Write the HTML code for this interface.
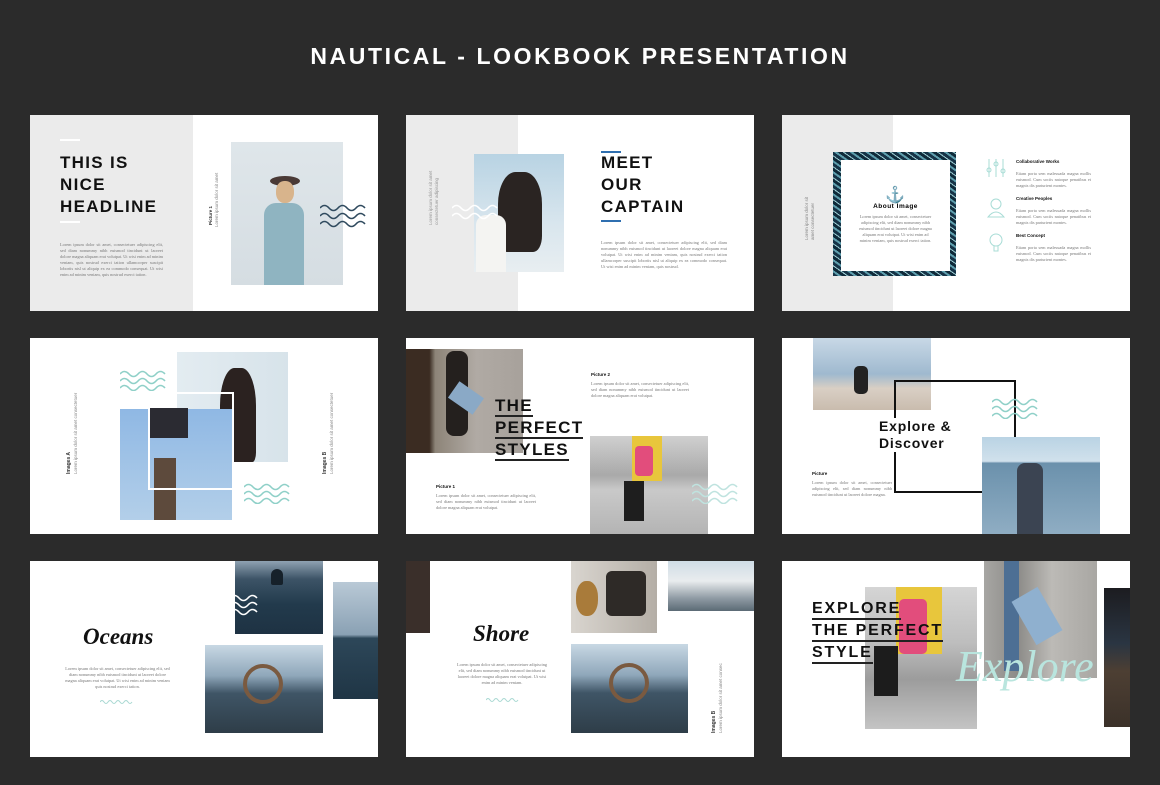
<!DOCTYPE html>
<html><head><meta charset="utf-8"><style>
*{margin:0;padding:0;box-sizing:border-box}
body{width:1160px;height:785px;background:#2b2b2b;position:relative;overflow:hidden;font-family:"Liberation Sans",sans-serif}
.t{position:absolute;top:43px;left:0;width:1160px;text-align:center;color:#fff;font-weight:bold;font-size:23px;letter-spacing:2.6px}
.s{position:absolute;width:348px;height:196px;background:#fff;overflow:hidden}
.a{position:absolute}
.g{background:#ebebeb}
.h{position:absolute;font-weight:bold;color:#111;font-size:17px;line-height:22px;letter-spacing:1.3px}
.p{position:absolute;font-size:4.3px;line-height:6px;color:#777;font-family:"Liberation Serif",serif;text-align:justify}
.lb{position:absolute;font-size:4.5px;font-weight:bold;color:#111}
.sc{position:absolute;font-family:"Liberation Serif",serif;font-style:italic;font-weight:bold;color:#111}
.v{position:absolute;transform:rotate(-90deg);transform-origin:left top;font-size:4.5px;color:#333;white-space:nowrap}
.u{border-bottom:2px solid #222;display:inline-block;line-height:19px}
</style></head><body>
<div class="t">NAUTICAL - LOOKBOOK PRESENTATION</div>
<svg width="0" height="0" style="position:absolute"><defs>
<path id="wv" d="M0 4 q4.5 -5 9 0 t9 0 t9 0 t9 0 t9 0" fill="none" stroke-width="1.6"/>
</defs></svg>

<!-- Slide 1 -->
<div class="s" style="left:30px;top:115px">
 <div class="a g" style="left:0;top:0;width:163px;height:196px"></div>
 <div class="a" style="left:30px;top:24px;width:20px;height:2px;background:#fff"></div>
 <div class="h" style="left:30px;top:37px">THIS IS<br>NICE<br>HEADLINE</div>
 <div class="a" style="left:30px;top:106px;width:20px;height:2px;background:#fff"></div>
 <div class="p" style="left:30px;top:127px;width:103px">Lorem ipsum dolor sit amet, consectetuer adipiscing elit, sed diam nonummy nibh euismod tincidunt ut laoreet dolore magna aliquam erat volutpat. Ut wisi enim ad minim veniam, quis nostrud exerci tation ullamcorper suscipit lobortis nisl ut aliquip ex ea commodo consequat. Ut wisi enim ad minim veniam, quis nostrud exerci tation.</div>
 <div class="v" style="left:178px;top:110px;font-weight:bold">Picture 1</div>
 <div class="v" style="left:184px;top:112px;color:#888">Lorem ipsum dolor sit amet</div>
 <div class="a" style="left:201px;top:27px;width:112px;height:143px;background:linear-gradient(#dfe6ea,#d5dde2)"></div>
 <div class="a" style="left:240px;top:61px;width:30px;height:10px;border-radius:50%;background:#4a3a36"></div>
 <div class="a" style="left:246px;top:66px;width:18px;height:22px;border-radius:45%;background:#d8b48c"></div>
 <div class="a" style="left:234px;top:88px;width:40px;height:82px;border-radius:12px 12px 0 0;background:#8fb4c1"></div>
 <svg class="a" style="left:290px;top:88px" width="46" height="26"><g stroke="#2f4a5e"><use href="#wv" y="1"/><use href="#wv" y="9"/><use href="#wv" y="17"/></g></svg>
</div>

<!-- Slide 2 -->
<div class="s" style="left:406px;top:115px">
 <div class="a g" style="left:0;top:0;width:112px;height:196px"></div>
 <div class="v" style="left:22px;top:110px;color:#999">Lorem ipsum dolor sit amet</div>
 <div class="v" style="left:28px;top:110px;color:#999">consectetuer adipiscing</div>
 <div class="a" style="left:68px;top:39px;width:90px;height:118px;background:linear-gradient(#b8d3e3,#d9e6ee 60%,#e8eef1)"></div>
 <div class="a" style="left:92px;top:57px;width:44px;height:80px;border-radius:40% 40% 20% 20%;background:#2a2422"></div>
 <div class="a" style="left:70px;top:100px;width:30px;height:57px;background:#f4f4f2;border-radius:10px 10px 0 0"></div>
 <svg class="a" style="left:46px;top:88px" width="46" height="20"><g stroke="#fff"><use href="#wv" y="1"/><use href="#wv" y="9"/></g></svg>
 <div class="a" style="left:195px;top:36px;width:20px;height:2px;background:#2f6fb0"></div>
 <div class="h" style="left:195px;top:37px">MEET<br>OUR<br>CAPTAIN</div>
 <div class="a" style="left:195px;top:105px;width:20px;height:2px;background:#2f6fb0"></div>
 <div class="p" style="left:195px;top:125px;width:126px">Lorem ipsum dolor sit amet, consectetuer adipiscing elit, sed diam nonummy nibh euismod tincidunt ut laoreet dolore magna aliquam erat volutpat. Ut wisi enim ad minim veniam, quis nostrud exerci tation ullamcorper suscipit lobortis nisl ut aliquip ex ea commodo consequat. Ut wisi enim ad minim veniam, quis nostrud.</div>
</div>

<!-- Slide 3 -->
<div class="s" style="left:782px;top:115px">
 <div class="a g" style="left:0;top:0;width:111px;height:196px"></div>
 <div class="v" style="left:22px;top:125px;color:#888">Lorem ipsum dolor sit</div>
 <div class="v" style="left:28px;top:125px;color:#888">amet consectetuer</div>
 <div class="a" style="left:51px;top:37px;width:123px;height:124px;background:repeating-linear-gradient(35deg,#163347 0 3px,#5f9fae 3px 5px,#0f2a3a 5px 8px,#9fd0d6 8px 9px)"></div>
 <div class="a" style="left:59px;top:45px;width:109px;height:111px;background:#fff"></div>
 <div class="a" style="left:103px;top:70px;color:#a8dcd6;font-size:16px">⚓</div>
 <div class="a" style="left:59px;top:88px;width:109px;text-align:center;font-size:6.5px;font-weight:bold;letter-spacing:.5px">About Image</div>
 <div class="p" style="left:76px;top:99px;width:75px;text-align:center">Lorem ipsum dolor sit amet, consectetuer adipiscing elit, sed diam nonummy nibh euismod tincidunt ut laoreet dolore magna aliquam erat volutpat. Ut wisi enim ad minim veniam, quis nostrud exerci tation.</div>
 <svg class="a" style="left:203px;top:42px" width="22" height="110" fill="none" stroke="#a8dcd6" stroke-width="1">
  <path d="M4 2v18M11 2v18M18 2v18"/><circle cx="4" cy="13" r="2"/><circle cx="11" cy="7" r="2"/><circle cx="18" cy="14" r="2"/>
  <circle cx="11" cy="47" r="5"/><path d="M3 60q8-10 16 0z"/>
  <circle cx="11" cy="83" r="6"/><path d="M9 89v5h4v-5"/>
 </svg>
 <div class="lb" style="left:234px;top:44px">Collaborative Works</div>
 <div class="p" style="left:234px;top:56px;width:75px">Etiam porta sem malesuada magna mollis euismod. Cum sociis natoque penatibus et magnis dis parturient montes.</div>
 <div class="lb" style="left:234px;top:81px">Creative Peoples</div>
 <div class="p" style="left:234px;top:93px;width:75px">Etiam porta sem malesuada magna mollis euismod. Cum sociis natoque penatibus et magnis dis parturient montes.</div>
 <div class="lb" style="left:234px;top:118px">Best Concept</div>
 <div class="p" style="left:234px;top:130px;width:75px">Etiam porta sem malesuada magna mollis euismod. Cum sociis natoque penatibus et magnis dis parturient montes.</div>
</div>

<!-- Slide 4 -->
<div class="s" style="left:30px;top:338px">
 <div class="a" style="left:147px;top:14px;width:111px;height:110px;background:linear-gradient(90deg,#e3ecf1,#d7e3ea)"></div>
 <div class="a" style="left:190px;top:30px;width:36px;height:94px;border-radius:40% 40% 10% 10%;background:#2b2220"></div>
 <div class="a" style="left:90px;top:71px;width:112px;height:111px;background:linear-gradient(#8fb8e4,#b3cfe9)"></div>
 <div class="a" style="left:124px;top:120px;width:22px;height:62px;background:#5d4a3c"></div>
 <div class="a" style="left:118px;top:70px;width:40px;height:30px;background:#2b2b32"></div>
 <div class="a" style="left:118px;top:54px;width:86px;height:98px;border:2px solid #fff"></div>
 <svg class="a" style="left:90px;top:31px" width="46" height="22"><g stroke="#8fd0c8"><use href="#wv" y="1"/><use href="#wv" y="8"/><use href="#wv" y="15"/></g></svg>
 <svg class="a" style="left:214px;top:144px" width="46" height="22"><g stroke="#8fd0c8"><use href="#wv" y="1"/><use href="#wv" y="8"/><use href="#wv" y="15"/></g></svg>
 <div class="v" style="left:36px;top:136px;font-weight:bold;font-size:5px">Images A</div>
 <div class="v" style="left:43px;top:136px;color:#888">Lorem ipsum dolor sit amet consectetuer</div>
 <div class="v" style="left:292px;top:136px;font-weight:bold;font-size:5px">Images B</div>
 <div class="v" style="left:299px;top:136px;color:#888">Lorem ipsum dolor sit amet consectetuer</div>
</div>

<!-- Slide 5 -->
<div class="s" style="left:406px;top:338px">
 <div class="a" style="left:0;top:11px;width:117px;height:104px;background:linear-gradient(90deg,#3b2c22 0 20%,#8d8478 25%,#b0aaa4 60%,#a7a19b)"></div>
 <div class="a" style="left:40px;top:13px;width:22px;height:85px;background:#24201e;border-radius:8px"></div>
 <div class="a" style="left:45px;top:50px;width:30px;height:20px;background:#8aa9c6;transform:rotate(35deg)"></div>
 <div class="h" style="left:89px;top:57px;line-height:22px"><span class="u">THE</span><br><span class="u">PERFECT</span><br><span class="u">STYLES</span></div>
 <div class="lb" style="left:185px;top:34px">Picture 2</div>
 <div class="p" style="left:185px;top:43px;width:98px">Lorem ipsum dolor sit amet, consectetuer adipiscing elit, sed diam nonummy nibh euismod tincidunt ut laoreet dolore magna aliquam erat volutpat.</div>
 <div class="a" style="left:184px;top:98px;width:118px;height:98px;background:linear-gradient(#d0d0d0,#a9a9a9 40%,#c9c9c9 55%,#b4b4b4)"></div>
 <div class="a" style="left:226px;top:98px;width:30px;height:45px;background:#e8c63c"></div>
 <div class="a" style="left:229px;top:108px;width:18px;height:30px;background:#e24d7c;border-radius:4px"></div>
 <div class="a" style="left:218px;top:143px;width:20px;height:40px;background:#1e1e1e"></div>
 <svg class="a" style="left:286px;top:144px" width="46" height="22"><g stroke="#bfe3df"><use href="#wv" y="1"/><use href="#wv" y="8"/><use href="#wv" y="15"/></g></svg>
 <div class="lb" style="left:30px;top:146px">Picture 1</div>
 <div class="p" style="left:30px;top:155px;width:100px">Lorem ipsum dolor sit amet, consectetuer adipiscing elit, sed diam nonummy nibh euismod tincidunt ut laoreet dolore magna aliquam erat volutpat.</div>
</div>

<!-- Slide 6 -->
<div class="s" style="left:782px;top:338px">
 <div class="a" style="left:31px;top:0;width:118px;height:72px;background:linear-gradient(#c8d8e6,#9fb9cf 50%,#d9cfc4 70%,#c9bcae)"></div>
 <div class="a" style="left:72px;top:28px;width:14px;height:28px;background:#222;border-radius:5px"></div>
 <div class="a" style="left:112px;top:42px;width:122px;height:113px;border:2px solid #111"></div>
 <div class="a" style="left:95px;top:80px;background:#fff;padding:0 2px;font-weight:bold;font-size:14px;line-height:17px;color:#111;letter-spacing:.8px">Explore &amp;<br>Discover</div>
 <svg class="a" style="left:210px;top:59px" width="46" height="22"><g stroke="#8fd0c8"><use href="#wv" y="1"/><use href="#wv" y="8"/><use href="#wv" y="15"/></g></svg>
 <div class="a" style="left:200px;top:99px;width:118px;height:97px;background:linear-gradient(#b9d3e4,#d1e1ec 25%,#6b91ac 27%,#8fadc3)"></div>
 <div class="a" style="left:235px;top:125px;width:26px;height:71px;background:#3b4452;border-radius:8px 8px 0 0"></div>
 <div class="lb" style="left:30px;top:133px">Picture</div>
 <div class="p" style="left:30px;top:142px;width:80px">Lorem ipsum dolor sit amet, consectetuer adipiscing elit, sed diam nonummy nibh euismod tincidunt ut laoreet dolore magna.</div>
</div>

<!-- Slide 7 -->
<div class="s" style="left:30px;top:561px">
 <div class="a" style="left:205px;top:0;width:88px;height:73px;background:linear-gradient(#8fa2b2,#3c5366 25%,#223a4c 60%,#1e3243)"></div>
 <div class="a" style="left:241px;top:8px;width:12px;height:16px;background:#16212a;border-radius:6px 6px 2px 2px"></div>
 <svg class="a" style="left:182px;top:32px" width="46" height="24"><g stroke="#fff"><use href="#wv" y="1"/><use href="#wv" y="8"/><use href="#wv" y="15"/></g></svg>
 <div class="a" style="left:175px;top:84px;width:118px;height:88px;background:linear-gradient(#c8d8e4,#8fa7ba 35%,#3f5566 55%,#2e3d48)"></div>
 <div class="a" style="left:213px;top:103px;width:40px;height:40px;border:4px solid #7a5a40;border-radius:50%"></div>
 <div class="a" style="left:303px;top:21px;width:45px;height:117px;background:linear-gradient(#b9c9d6,#8aa1b4 45%,#2d4759 48%,#1f3545)"></div>
 <div class="sc" style="left:53px;top:63px;font-size:23px">Oceans</div>
 <div class="p" style="left:34px;top:105px;width:107px;text-align:center">Lorem ipsum dolor sit amet, consectetuer adipiscing elit, sed diam nonummy nibh euismod tincidunt ut laoreet dolore magna aliquam erat volutpat. Ut wisi enim ad minim veniam quis nostrud exerci tation.</div>
 <svg class="a" style="left:70px;top:138px" width="34" height="6"><path d="M0 3q2-3 4 0t4 0t4 0t4 0t4 0t4 0t4 0t4 0" fill="none" stroke="#a8d8d2"/></svg>
</div>

<!-- Slide 8 -->
<div class="s" style="left:406px;top:561px">
 <div class="a" style="left:0;top:0;width:24px;height:72px;background:#3a2f2a"></div>
 <div class="a" style="left:165px;top:0;width:86px;height:72px;background:linear-gradient(90deg,#d9d5cf,#b4aea6)"></div>
 <div class="a" style="left:170px;top:20px;width:22px;height:35px;background:#a97b3a;border-radius:45%"></div>
 <div class="a" style="left:200px;top:10px;width:40px;height:45px;background:#2e2a27;border-radius:6px"></div>
 <div class="a" style="left:262px;top:0;width:86px;height:50px;background:linear-gradient(#cfdde6,#e9ecee 40%,#8e9aa3 75%,#5b6a75)"></div>
 <div class="a" style="left:165px;top:83px;width:117px;height:89px;background:linear-gradient(#c8d8e4,#8fa7ba 35%,#3f5566 55%,#2e3d48)"></div>
 <div class="a" style="left:203px;top:102px;width:40px;height:40px;border:4px solid #7a5a40;border-radius:50%"></div>
 <div class="sc" style="left:67px;top:60px;font-size:23px">Shore</div>
 <div class="p" style="left:50px;top:101px;width:92px;text-align:center">Lorem ipsum dolor sit amet, consectetuer adipiscing elit, sed diam nonummy nibh euismod tincidunt ut laoreet dolore magna aliquam erat volutpat. Ut wisi enim ad minim veniam.</div>
 <svg class="a" style="left:80px;top:136px" width="34" height="6"><path d="M0 3q2-3 4 0t4 0t4 0t4 0t4 0t4 0t4 0t4 0" fill="none" stroke="#a8d8d2"/></svg>
 <div class="v" style="left:305px;top:172px;font-weight:bold;font-size:5px">Images B</div>
 <div class="v" style="left:312px;top:172px;color:#888">Lorem ipsum dolor sit amet consec</div>
</div>

<!-- Slide 9 -->
<div class="s" style="left:782px;top:561px">
 <div class="a" style="left:83px;top:26px;width:112px;height:142px;background:linear-gradient(#d5d5d5,#bdbdbd 40%,#9c9c9c 65%,#c4c4c4)"></div>
 <div class="a" style="left:114px;top:26px;width:46px;height:67px;background:#e8c63c"></div>
 <div class="a" style="left:117px;top:38px;width:28px;height:55px;background:#e24d7c;border-radius:5px"></div>
 <div class="a" style="left:92px;top:85px;width:24px;height:50px;background:#1c1c1c"></div>
 <div class="a" style="left:202px;top:0;width:113px;height:117px;background:linear-gradient(90deg,#a7a6a3,#8c8b88 30%,#bcbab6 60%,#a9a7a3)"></div>
 <div class="a" style="left:222px;top:0;width:15px;height:110px;background:#4d6f94"></div>
 <div class="a" style="left:240px;top:30px;width:30px;height:50px;background:#8fb0cf;transform:rotate(-30deg)"></div>
 <div class="a" style="left:322px;top:27px;width:26px;height:139px;background:linear-gradient(#1c1c20,#2a3542 40%,#4d3f33 60%,#3b3129)"></div>
 <div class="h" style="left:30px;top:37px;font-size:16px;letter-spacing:1.8px"><span class="u">EXPLORE</span><br><span class="u">THE PERFECT</span><br><span class="u">STYLE</span></div>
 <div class="sc" style="left:174px;top:80px;font-size:44px;color:#b9e5de;font-weight:normal">Explore</div>
</div>
</body></html>
